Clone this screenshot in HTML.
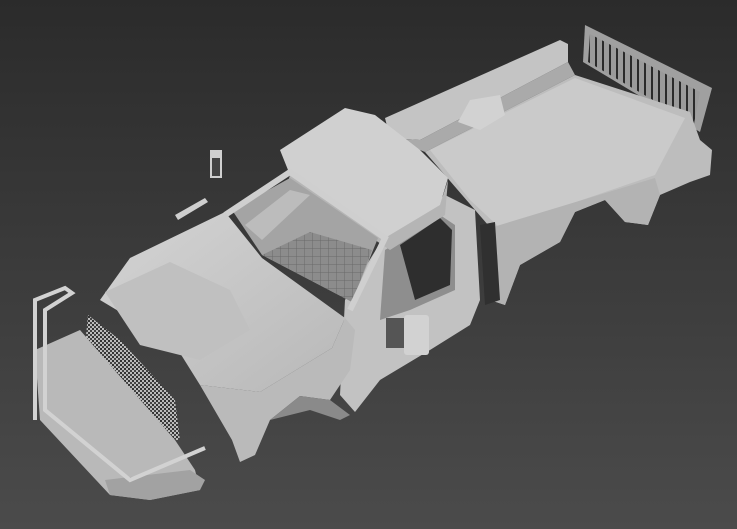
<!DOCTYPE html>
<html><head><meta charset="utf-8"><style>
html,body{margin:0;padding:0;width:737px;height:529px;overflow:hidden;background:linear-gradient(#2c2c2c,#4a4a4a);}
svg{display:block}
</style></head><body>
<svg width="737" height="529" viewBox="0 0 737 529" xmlns="http://www.w3.org/2000/svg">
<defs>
<linearGradient id="bg" x1="0" y1="0" x2="0" y2="1"><stop offset="0" stop-color="#2b2b2b"/><stop offset="1" stop-color="#4b4b4b"/></linearGradient>
<linearGradient id="hood" x1="0" y1="0" x2="1" y2="1"><stop offset="0" stop-color="#d4d4d4"/><stop offset="1" stop-color="#b8b8b8"/></linearGradient>
<pattern id="grid" width="8" height="8" patternUnits="userSpaceOnUse"><rect width="8" height="8" fill="#8c8c8c"/><path d="M0 0H8M0 0V8" stroke="#6a6a6a" stroke-width="1"/></pattern>
<pattern id="mesh" width="4" height="4" patternUnits="userSpaceOnUse"><rect width="4" height="4" fill="#bbb"/><rect width="2" height="2" fill="#333"/><rect x="2" y="2" width="2" height="2" fill="#444"/></pattern>
<pattern id="slats" width="7" height="10" patternUnits="userSpaceOnUse"><rect width="7" height="10" fill="#9a9a9a"/><rect width="2" height="10" fill="#2a2a2a"/></pattern>
</defs>
<rect width="737" height="529" fill="url(#bg)"/>
<!-- bed left rail -->
<polygon points="385,118 560,40 568,44 568,62 420,140 390,138" fill="#c4c4c4"/>
<polygon points="390,138 420,140 568,62 575,75 425,152" fill="#aaaaaa"/>
<!-- tailgate grille -->
<polygon points="585,25 712,88 700,132 583,62" fill="#a0a0a0"/>
<polygon points="590,34 700,92 694,124 588,62" fill="url(#slats)"/>
<!-- bed right side & rear -->
<polygon points="575,75 690,112 700,140 712,150 710,175 690,182 660,195 648,225 625,222 605,200 575,212 560,242 520,265 505,305 490,300 488,225 425,152" fill="#bdbdbd"/>
<!-- bed floor -->
<polygon points="430,150 575,78 685,118 655,175 500,228 470,200" fill="#cacaca"/>
<polygon points="490,228 655,178 660,195 648,225 625,222 605,200 575,212 560,242 520,265 505,305 490,300" fill="#b3b3b3"/>
<polygon points="470,100 500,95 505,115 480,130 458,122" fill="#d2d2d2"/>
<!-- cab back dark strip -->
<polygon points="480,225 495,222 500,300 485,305" fill="#303030"/>
<!-- cab side -->
<polygon points="385,235 445,195 475,210 480,300 470,325 430,350 380,380 355,412 340,395 345,300" fill="#c2c2c2"/>
<!-- door window -->
<polygon points="385,250 440,215 455,225 455,290 410,310 380,320" fill="#8e8e8e"/>
<polygon points="400,245 440,218 452,230 450,285 415,300" fill="#2e2e2e"/>
<!-- roof -->
<polygon points="280,150 345,108 375,115 420,150 448,178 440,205 385,238 290,175" fill="#d0d0d0"/>
<polygon points="290,175 385,238 440,205 448,180 445,215 390,250 288,182" fill="#b5b5b5"/>
<!-- windshield interior -->
<polygon points="232,210 290,178 378,238 352,302 262,255" fill="#a4a4a4"/>
<polygon points="262,255 310,232 372,250 352,302" fill="url(#grid)"/>
<polygon points="245,225 290,190 310,195 262,240" fill="#bcbcbc"/>
<!-- pillars -->
<polyline points="225,215 290,172 385,238 350,310" fill="none" stroke="#cfcfcf" stroke-width="6"/>
<!-- hood & front -->
<polygon points="100,300 130,258 225,212 262,258 345,318 332,348 260,392 200,385 175,345" fill="url(#hood)"/>
<polygon points="105,292 170,262 230,290 250,330 200,360 140,345" fill="#c0c0c0"/>
<!-- front fender -->
<polygon points="200,385 260,392 332,348 345,318 355,330 350,370 330,400 300,396 270,420 255,455 240,462 232,440" fill="#bababa"/>
<polygon points="270,420 300,396 330,400 350,415 340,420 310,410" fill="#8a8a8a"/>
<!-- grille -->
<polygon points="88,315 120,340 175,400 180,440 165,440 85,345" fill="url(#mesh)"/>
<!-- bumper -->
<polygon points="35,350 80,330 175,440 195,470 200,490 150,500 110,495 40,420" fill="#b9b9b9"/>
<polygon points="110,495 150,500 200,490 205,480 190,470 105,480" fill="#a2a2a2"/>
<polyline points="35,420 35,300 65,288 72,293 45,310 45,410 130,480 205,448" fill="none" stroke="#d2d2d2" stroke-width="4"/>
<!-- mirrors -->
<rect x="210" y="150" width="12" height="28" fill="#d0d0d0"/>
<rect x="212" y="158" width="8" height="18" fill="#444"/>
<polygon points="175,215 205,198 208,202 178,220" fill="#cfcfcf"/>
<rect x="404" y="315" width="25" height="40" rx="3" fill="#d2d2d2"/>
<rect x="386" y="318" width="18" height="30" fill="#555"/>
</svg>
</body></html>
